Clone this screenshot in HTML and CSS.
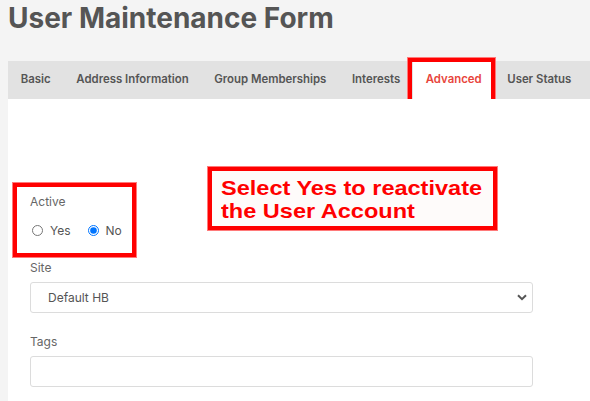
FILE: index.html
```html
<!DOCTYPE html>
<html lang="en">
<head>
<meta charset="utf-8">
<title>User Maintenance Form</title>
<link rel="stylesheet" href="styles.css">
</head>
<body>
<div class="page">
  <h1 class="title">User Maintenance Form</h1>
  <nav class="tabs">
    <span class="tab">Basic</span>
    <span class="tab">Address Information</span>
    <span class="tab">Group Memberships</span>
    <span class="tab">Interests</span>
    <span class="tab tab-active">Advanced</span>
    <span class="tab">User Status</span>
  </nav>
  <section class="panel">
    <div class="callout"><span class="callout-text">Select Yes to reactivate<br>the User Account</span></div>
    <div class="group group-active">
      <div class="label">Active</div>
      <div class="radios">
        <label class="radio"><input type="radio" name="active"> <span>Yes</span></label>
        <label class="radio"><input type="radio" name="active" checked> <span>No</span></label>
      </div>
    </div>
    <div class="group">
      <div class="label">Site</div>
      <div class="select">
        <span>Default HB</span>
        <svg class="chev" width="10" height="7" viewBox="0 0 10 7"><path d="M1 1.2 L5 5.2 L9 1.2" fill="none" stroke="#555" stroke-width="2"/></svg>
      </div>
    </div>
    <div class="group">
      <div class="label">Tags</div>
      <div class="input"></div>
    </div>
  </section>
</div>
</body>
</html>
```
FILE: styles.css
```css
html, body {
  margin: 0;
  padding: 0;
  background: #f4f4f4;
  overflow: hidden;
}
body {
  font-family: Inter, "Noto Sans", sans-serif;
  color: #555;
}
.page {
  box-sizing: border-box;
  padding: 1px 0 0 8px;
  height: 401px;
  display: flex;
  flex-direction: column;
}
.title {
  flex-shrink: 0;
  margin: 0;
  font-size: 28px;
  line-height: 34px;
  font-weight: 700;
  color: #555;
}
.tabs {
  flex-shrink: 0;
  margin-top: 26px;
  display: flex;
  height: 38px;
  background: #e2e2e2;
}
.tab {
  padding: 0 12.8px;
  line-height: 37px;
  font-size: 11.4px;
  font-weight: 600;
  color: #555;
  white-space: nowrap;
}
.tab-active {
  position: relative;
  background: #fff;
  color: #e8453c;
}
.tab-active::after {
  content: "";
  position: absolute;
  left: -5px;
  right: -1px;
  top: -3px;
  bottom: -4px;
  border: 4px solid #ff0000;
  box-shadow: 0 0 0 1px #ff7a7a;
  pointer-events: none;
}
.panel {
  position: relative;
  flex: 1 0 auto;
  background: #fff;
  padding: 94px 57px 0 22px;
}
.callout {
  position: absolute;
  left: 200px;
  top: 68px;
  width: 272px;
  height: 50px;
  padding: 5px 0 0 9px;
  border: 4px solid #ff0000;
  box-shadow: 0 0 0 1px #ff7a7a;
  background: #fefbfa;
  font-family: "Liberation Sans", Arial, sans-serif;
  font-weight: 700;
  font-size: 21px;
  line-height: 23px;
  color: #ff0000;
  white-space: nowrap;
}
.callout-text {
  display: inline-block;
  transform: scaleX(1.12);
  transform-origin: left center;
}
.group {
  margin-bottom: 20px;
}
.group:last-child {
  margin-bottom: 0;
}
.group-active {
  position: relative;
  margin-bottom: 20px;
}
.group-active::after {
  content: "";
  position: absolute;
  left: -17px;
  top: -10px;
  width: 115px;
  height: 66px;
  border: 4px solid #ff0000;
  box-shadow: 0 0 0 1px #ff7a7a;
  pointer-events: none;
}
.label {
  font-size: 12px;
  line-height: 18px;
  color: #666;
}
.group .label + .select,
.group .label + .input {
  margin-top: 5px;
}
.radios {
  margin-top: 10px;
  display: flex;
  gap: 15px;
  height: 18px;
  align-items: center;
}
.radio {
  display: flex;
  align-items: center;
  font-size: 12px;
  color: #555;
}
.radio input {
  width: 11px;
  height: 11px;
  margin: 0 7px 0 2px;
}
.select,
.input {
  box-sizing: border-box;
  height: 31px;
  border: 1px solid #dcdcdc;
  border-radius: 3px;
  background: #fff;
}
.select {
  display: flex;
  align-items: center;
  justify-content: space-between;
  padding: 0 5px 0 17px;
  font-size: 12px;
  color: #555;
}
.chev {
  display: block;
}
```
